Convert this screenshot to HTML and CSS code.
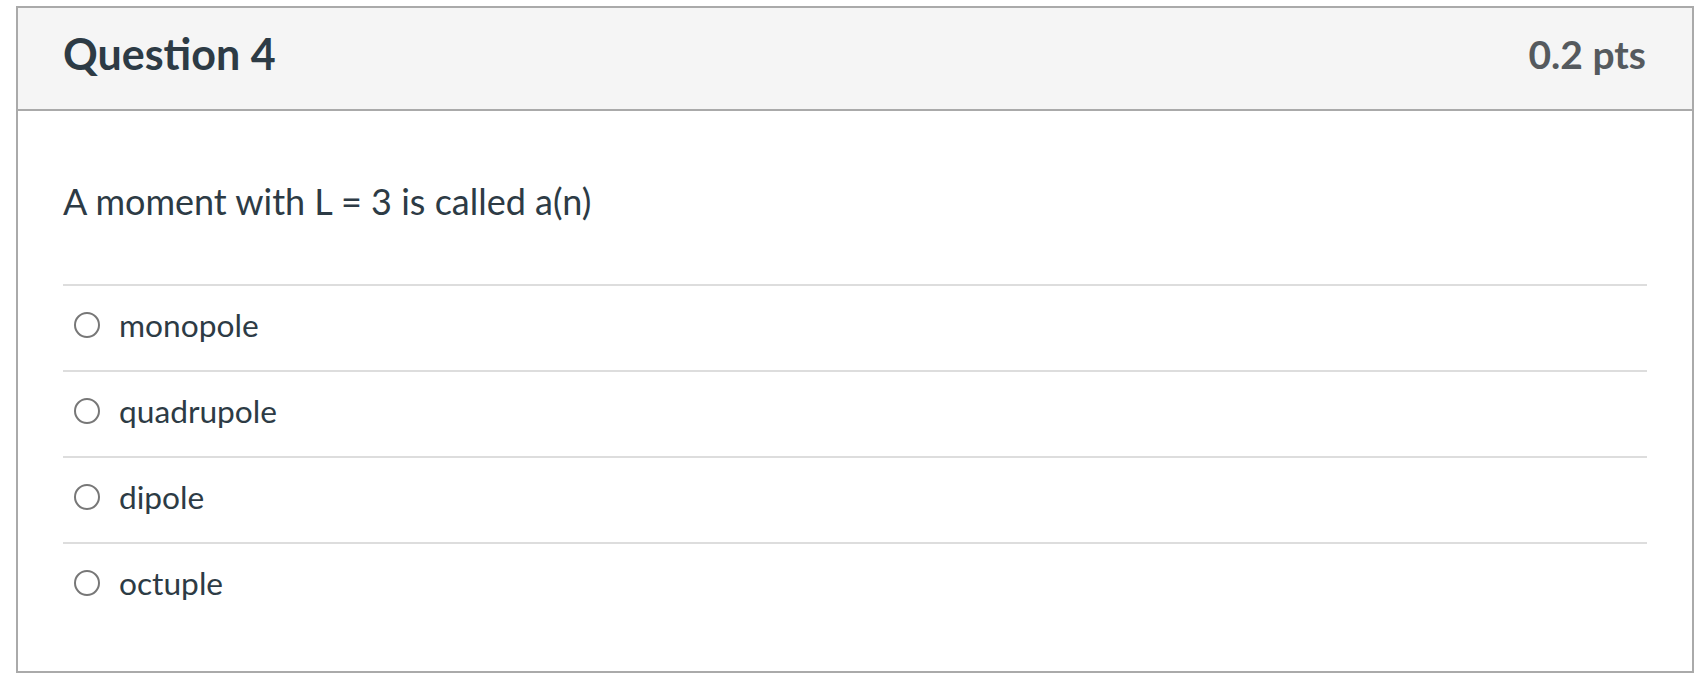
FILE: index.html
```html
<!DOCTYPE html>
<html>
<head>
<meta charset="utf-8">
<link rel="stylesheet" href="styles.css">
</head>
<body>
<div class="question">
  <div class="q-header">
    <h3 class="q-title">Question 4</h3>
    <span class="q-points">0.2 pts</span>
  </div>
  <div class="q-body">
    <p class="q-text">A moment with L = 3 is called a(n)</p>
    <ul class="answers">
      <li class="answer"><span class="radio"></span><span class="label">monopole</span></li>
      <li class="answer"><span class="radio"></span><span class="label">quadrupole</span></li>
      <li class="answer"><span class="radio"></span><span class="label">dipole</span></li>
      <li class="answer"><span class="radio"></span><span class="label">octuple</span></li>
    </ul>
  </div>
</div>
</body>
</html>
```
FILE: styles.css
```css
html, body {
  margin: 0;
  padding: 0;
  background: #ffffff;
}
body {
  padding: 6px 6px 0 16px;
  font-family: Lato, "Noto Sans", sans-serif;
  color: #2d3b45;
}
.question {
  border: 2px solid #aaaaaa;
  height: 663px;
  box-sizing: content-box;
}
.q-header {
  display: flex;
  align-items: center;
  justify-content: space-between;
  height: 91px;
  background: #f5f5f5;
  border-bottom: 2px solid #aaaaaa;
  padding: 0 46px 10px 45px;
}
.q-title {
  margin: 0;
  font-size: 43px;
  font-weight: 700;
  color: #2d3b45;
}
.q-points {
  font-size: 39px;
  font-weight: 700;
  color: #555a5e;
}
.q-body {
  padding: 0 45px 0 45px;
}
.q-text {
  margin: 0;
  padding-top: 70px;
  height: 103px;
  font-size: 36px;
  line-height: 40px;
  box-sizing: content-box;
}
.answers {
  list-style: none;
  margin: 0;
  padding: 0;
}
.answer {
  display: flex;
  align-items: center;
  height: 78px;
  border-top: 2px solid #dddddd;
  padding-left: 11px;
  padding-bottom: 6px;
  box-sizing: content-box;
}
.radio {
  width: 22px;
  height: 22px;
  border: 2px solid #777777;
  border-radius: 50%;
  flex: none;
}
.label {
  margin-left: 19px;
  font-size: 31.7px;
}
```
